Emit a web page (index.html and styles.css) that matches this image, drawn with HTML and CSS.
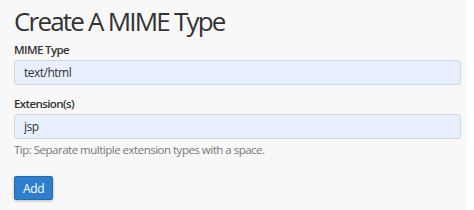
FILE: index.html
```html
<!DOCTYPE html>
<html lang="en">
<head>
<meta charset="UTF-8">
<title>Create A MIME Type</title>
<link rel="stylesheet" href="styles.css">
</head>
<body>

<div class="panel">
    <h1>Create A MIME Type</h1>

    <div class="field">
        <label for="mimeType">MIME Type</label>
        <input id="mimeType" type="text" value="text/html">
    </div>

    <div class="field">
        <label for="extensions">Extension(s)</label>
        <input id="extensions" type="text" value="jsp">
        <div class="tip">Tip: Separate multiple extension types with a space.</div>
    </div>

    <button class="btn-primary">Add</button>
</div>

</body>
</html>
```

FILE: styles.css
```css
/* Page */
body {
    margin: 0;
    background: #fff;
    font-family: "Open Sans", Arial, sans-serif;
    color: #333;
}
.panel {
    width: 466px;
    height: 210px;
    padding: 4px 0 0 14px;
    box-sizing: border-box;
    background: #f8f8f8;
}

/* Heading */
h1 {
    margin: 0 0 4px 0;
    font-size: 26px;
    font-weight: 400;
    letter-spacing: -1.8px;
    line-height: 34px;
}

/* Form fields */
.field {
    margin-bottom: 11px;
}
label {
    display: block;
    font-size: 11.5px;
    font-weight: 600;
    letter-spacing: -0.6px;
    line-height: 16px;
    margin-bottom: 2px;
}
input {
    display: block;
    width: 447px;
    height: 25px;
    box-sizing: border-box;
    padding: 0 9px;
    border: 1px solid #d3d8de;
    border-radius: 3px;
    background: #e8f0fe;
    font-family: inherit;
    font-size: 12px;
    letter-spacing: -0.5px;
    color: #333;
}
.tip {
    font-size: 11.5px;
    letter-spacing: -0.5px;
    line-height: 16px;
    color: #777;
    margin-top: 3px;
}

/* Button */
.btn-primary {
    margin-top: 7px;
    padding: 0 8px;
    height: 24px;
    border: 1px solid #2269b0;
    border-radius: 2px;
    background: #2d7fcd;
    color: #fff;
    font-family: inherit;
    font-size: 12px;
    letter-spacing: -0.4px;
    box-shadow: 0 1px 3px rgba(0, 0, 0, 0.25);
}
```
